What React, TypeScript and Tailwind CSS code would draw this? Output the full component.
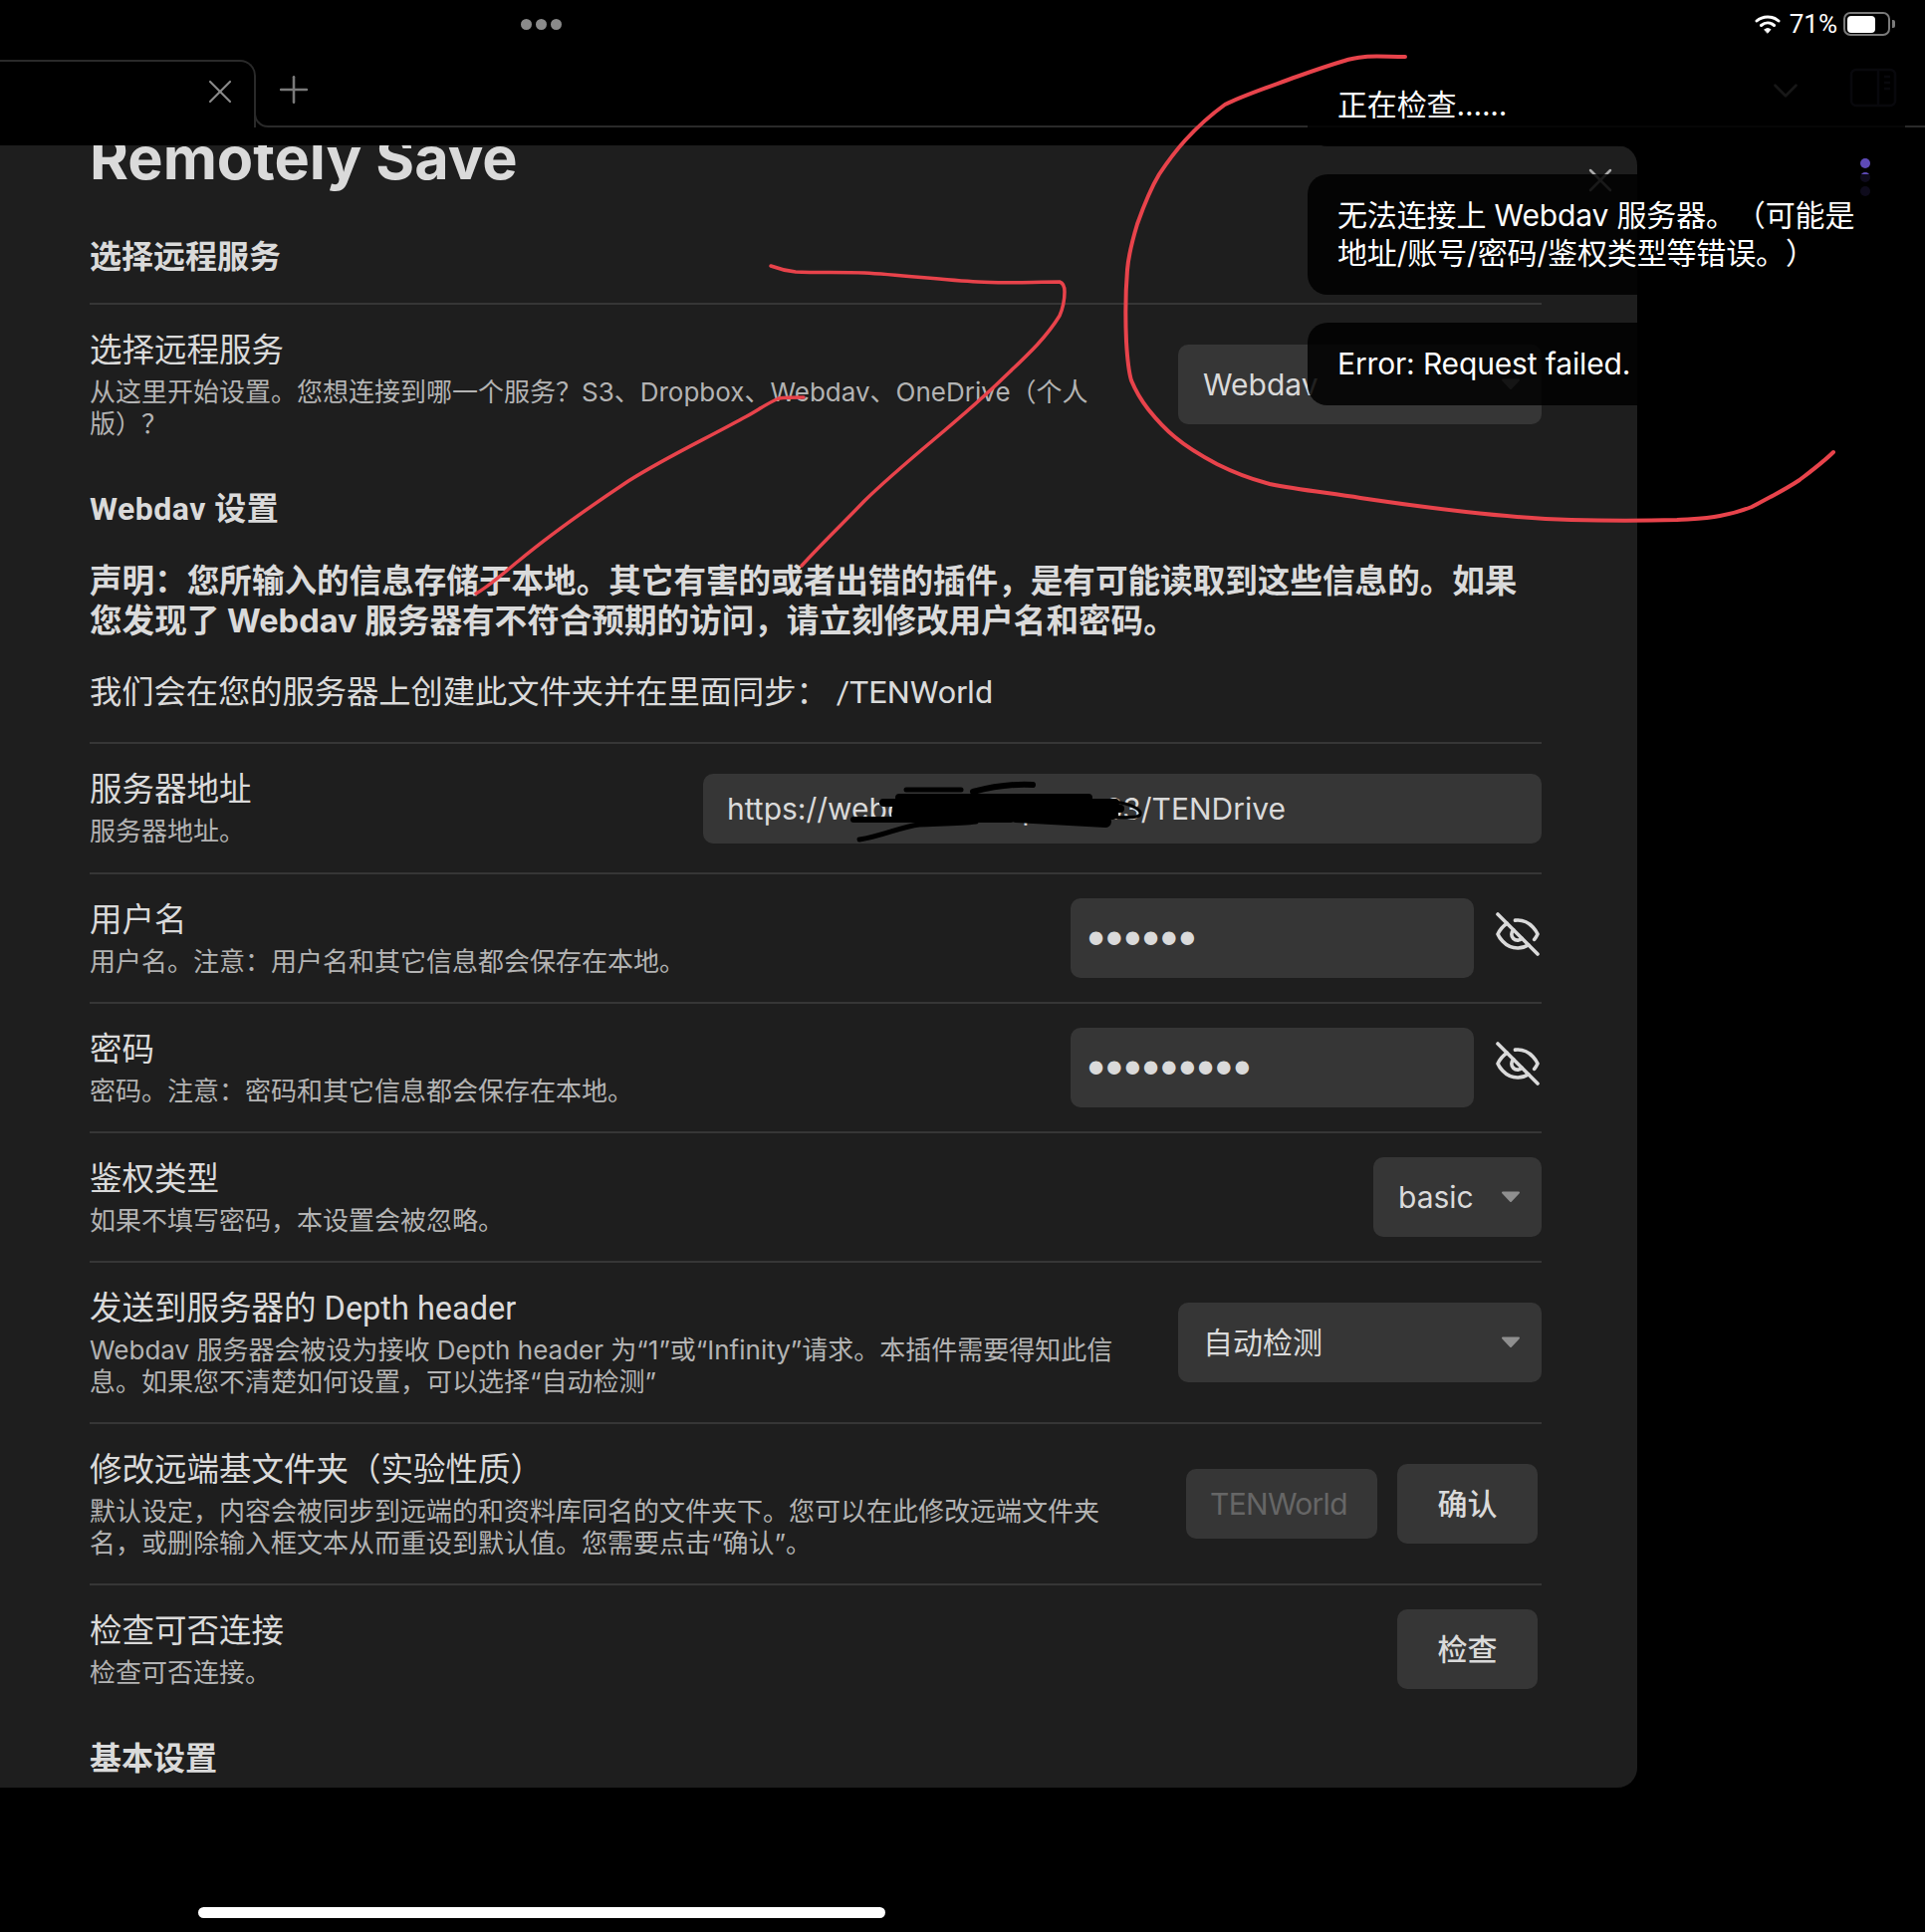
import React from 'react';
import { X, Plus, ChevronDown } from 'lucide-react';

const divider = 'border-t-2 border-[#363636]';
const control = 'rounded-[10px] bg-[#363636] text-[30px] text-[#dadada]';

interface RowProps {
	title: string;
	children?: React.ReactNode;
	desc: React.ReactNode;
	className?: string;
}

const Row = ({ title, desc, children, className = 'min-h-[130px]' }: RowProps) => (
	<div className={`flex items-center justify-between py-[24px] ${divider} ${className}`}>
		<div className="shrink-0">
			<div className="mb-[5px] font-['Roboto','Noto_Sans_CJK_SC',sans-serif] text-[32.5px] leading-[42px] text-[#dadada]">{title}</div>
			<div className="text-[26px] leading-[32px] text-[#b3b3b3]">{desc}</div>
		</div>
		{children}
	</div>
);

const Arrow = () => (
	<svg width="20" height="12" viewBox="0 0 20 12" className="shrink-0">
		<path d="M2 1.5h16L10 10z" fill="#8f8f8f" stroke="#8f8f8f" strokeWidth="2" strokeLinejoin="round" />
	</svg>
);

const Select = ({ label, className }: { label: string; className: string }) => (
	<div className={`flex h-[80px] items-center justify-between pl-[25px] pr-[21px] ${control} ${className}`}>
		<span>{label}</span>
		<Arrow />
	</div>
);

const EyeOff = () => (
	<svg width="48" height="48" viewBox="0 0 24 24" fill="none" stroke="#dadada" strokeWidth="1.8" strokeLinecap="round" strokeLinejoin="round" className="mb-[8px] shrink-0">
		<path d="M9.88 9.88a3 3 0 1 0 4.24 4.24" />
		<path d="M10.73 5.08A10.43 10.43 0 0 1 12 5c7 0 10 7 10 7a13.16 13.16 0 0 1-1.67 2.68" />
		<path d="M6.61 6.61A13.526 13.526 0 0 0 2 12s3 7 10 7a9.74 9.74 0 0 0 5.39-1.61" />
		<line x1="2" y1="2" x2="22" y2="22" />
	</svg>
);

const Secret = ({ value }: { value: string }) => (
	<div className="flex items-center gap-[20px]">
		<input
			type="password"
			readOnly
			value={value}
			className="h-[80px] w-[405px] rounded-[10px] bg-[#363636] px-[12px] pt-[4px] font-['DejaVu_Sans',sans-serif] text-[46px] tracking-[-8.8px] text-[#dadada] outline-none"
		/>
		<EyeOff />
	</div>
);

const Button = ({ label }: { label: string }) => (
	<button className={`mr-[4px] h-[80px] w-[141px] font-medium ${control}`}>{label}</button>
);

const Wifi = () => (
	<svg width="26" height="20" viewBox="0 0 26 20" fill="none" stroke="#fff" strokeWidth="3" strokeLinecap="round">
		<path d="M2 7C8 1.5 18 1.5 24 7" />
		<path d="M6.5 11.5C10.5 8 15.5 8 19.5 11.5" />
		<path d="M10 15.5Q13 13.5 16 15.5L13 19z" fill="#fff" strokeWidth="1" strokeLinejoin="round" />
	</svg>
);

const Battery = () => (
	<div className="flex items-center gap-[2px]">
		<div className="flex h-[24px] w-[47px] items-center rounded-[7px] border-2 border-[#7a7a7a] px-[2px]">
			<div className="h-[17px] w-[28px] rounded-[4px] bg-white" />
		</div>
		<div className="h-[8px] w-[3px] rounded-r-[2px] bg-[#7a7a7a]" />
	</div>
);

const SidebarIcon = () => (
	<svg width="48" height="40" viewBox="0 0 48 40" fill="none" stroke="#3a3a55" strokeWidth="2.5">
		<rect x="2" y="2" width="44" height="36" rx="5" />
		<path d="M29 2v36M35 9h6M35 15h6M35 21h6" />
	</svg>
);

// red pen marks + black scribble drawn on top of the screenshot
const Annotations = () => (
	<svg className="pointer-events-none absolute left-0 top-0" width="1933" height="1940" fill="none" strokeLinecap="round" strokeLinejoin="round">
		<g stroke="#000">
			<path strokeWidth="5" d="M910 793L965 793" />
			<path strokeWidth="6" d="M977 795C1000 789 1020 787 1037 788" />
			<path strokeWidth="8" d="M903 801L1093 801" />
			<path strokeWidth="8" d="M887 806L1120 806" />
			<path strokeWidth="8" d="M900 812L1125 812" />
			<path strokeWidth="10" d="M900 818L1118 818" />
			<path strokeWidth="6" d="M857 823L1015 823" />
			<path strokeWidth="12" d="M1020 820L1110 825" />
			<path strokeWidth="5" d="M863 843C885 840 905 830 923 828C945 827 965 827 980 825" />
			<path strokeWidth="3" d="M1120 805C1135 807 1147 813 1145 818C1142 822 1125 821 1110 820" />
		</g>
		<g stroke="#e8434b">
			<path
				strokeWidth="4"
				d="M1411 57C1395 57 1380 56 1371 57C1362 58 1356 59 1350 61C1333 66 1316 72 1302 77C1278 86 1250 95 1230 105C1212 118 1200 130 1190 141C1180 152 1172 163 1164 175C1155 190 1148 208 1142 225C1136 245 1133 258 1132 271C1130 295 1130 320 1131 343C1132 360 1133 372 1136 382C1141 394 1146 402 1153 411C1161 421 1170 431 1180 439C1193 450 1207 458 1222 466C1238 474 1256 481 1275 486C1305 492 1335 495 1366 500C1400 505 1436 510 1472 514C1508 518 1543 521 1578 522C1614 523 1650 523 1684 522C1700 521 1714 521 1727 518C1738 516 1749 513 1759 509C1776 500 1792 492 1807 482C1820 472 1832 463 1841 454"
			/>
			<path
				strokeWidth="3.5"
				d="M774 267C782 270 790 272 799 273C822 274 845 273 868 274C905 276 945 281 982 283C1010 285 1037 283 1064 283C1067 284 1069 288 1069 293C1069 302 1067 310 1064 317C1050 340 1030 358 1007 380C962 424 912 460 868 503C847 525 826 545 805 568"
			/>
			<path
				strokeWidth="3.5"
				d="M807 399C798 399 790 399 782 400C770 405 758 414 746 420C708 441 669 459 631 483C592 509 556 534 521 563C506 575 492 588 478 596"
			/>
		</g>
	</svg>
);

export default function App() {
	return (
		<div lang="zh-CN" className="relative h-[1940px] w-[1933px] overflow-hidden bg-black font-['Inter','Noto_Sans_CJK_SC',sans-serif] [text-spacing-trim:space-all]">
			{/* status bar */}
			<div className="flex h-[48px] items-center justify-between pl-[523px] pr-[30px]">
				<div className="flex gap-[4px]">
					<div className="h-[11px] w-[11px] rounded-full bg-[#8a8a8a]" />
					<div className="h-[11px] w-[11px] rounded-full bg-[#8a8a8a]" />
					<div className="h-[11px] w-[11px] rounded-full bg-[#8a8a8a]" />
				</div>
				<div className="flex items-center gap-[9px]">
					<Wifi />
					<span className="-mr-[3px] font-['Roboto',sans-serif] text-[26px] leading-none text-white">71%</span>
					<Battery />
				</div>
			</div>

			{/* tab bar */}
			<div className="mt-[12px] flex h-[68px]">
				<div className="flex h-[68px] w-[257px] items-center justify-end rounded-tr-[16px] border-r-2 border-t-2 border-[#2a2a2a] pb-[6px] pr-[14px]">
					<X size={40} strokeWidth={1.3} color="#8a8a8a" />
				</div>
				<div className="relative mt-[20px] flex h-[48px] flex-1 items-center justify-between rounded-bl-[14px] border-b-2 border-l-2 border-[#2a2a2a] -ml-[2px] pl-[16px]">
					<Plus size={44} strokeWidth={1.4} color="#7a7a7a" className="-mt-[26px]" />
				</div>
			</div>
			<div className="absolute left-[1772px] top-[70px]">
				<ChevronDown size={42} strokeWidth={1.5} color="#9a9a9a" />
			</div>
			<div className="absolute left-[1857px] top-[68px]">
				<SidebarIcon />
			</div>
			<div className="absolute left-[1868px] top-[159px] flex flex-col gap-[4px]">
				<div className="h-[10px] w-[10px] rounded-full bg-[#5e4ab8]" />
				<div className="h-[10px] w-[10px] rounded-full bg-[#5e4ab8]" />
				<div className="h-[10px] w-[10px] rounded-full bg-[#5e4ab8]" />
			</div>

			{/* settings panel */}
			<div className="relative mt-[18px] h-[1649px] w-[1644px] overflow-hidden rounded-r-[20px] bg-[#1e1e1e] pl-[90px] pr-[96px]">
				<div className="absolute left-[1587px] top-[15px]">
					<X size={40} strokeWidth={1.5} color="#aaaaaa" />
				</div>
				<h1 className="-mt-[20px] mb-[48px] text-[59.4px] font-bold leading-[64px] text-[#dadada]">Remotely Save</h1>
				<h2 className="mb-[26px] text-[32px] font-bold leading-[40px] text-[#dadada]">选择远程服务</h2>

				<Row
					title="选择远程服务"
					className="min-h-[162px]"
					desc={
						<>
							从这里开始设置。您想连接到哪一个服务&#xFF1F;S3、Dropbox、Webdav、OneDrive&#xFF08;个人
							<br />
							版&#xFF09;&#xFF1F;
						</>
					}
				>
					<Select label="Webdav" className="w-[365px]" />
				</Row>

				<h2 className="mt-[25px] font-['Roboto','Noto_Sans_CJK_SC',sans-serif] text-[32px] font-bold leading-[40px] tracking-[0.5px] text-[#dadada]">Webdav 设置</h2>
				<p className="mt-[32px] text-[32.6px] font-bold leading-[40px] text-[#dadada]">
					声明&#xFF1A;您所输入的信息存储于本地。其它有害的或者出错的插件&#xFF0C;是有可能读取到这些信息的。如果
					<br />
					您发现了 Webdav 服务器有不符合预期的访问&#xFF0C;请立刻修改用户名和密码。
				</p>
				<p className="mb-[30px] mt-[32px] font-['Roboto','Noto_Sans_CJK_SC',sans-serif] text-[32.25px] leading-[40px] text-[#dadada]">我们会在您的服务器上创建此文件夹并在里面同步&#xFF1A; /TENWorld</p>

				<Row title="服务器地址" desc="服务器地址。" className="min-h-[131px]">
					<input
						readOnly
						value="https://webdav.example-a:63/TENDrive"
						className={`h-[70px] w-[842px] px-[24px] outline-none ${control}`}
					/>
				</Row>
				<Row title="用户名" desc="用户名。注意&#xFF1A;用户名和其它信息都会保存在本地。">
					<Secret value="aaaaaa" />
				</Row>
				<Row title="密码" desc="密码。注意&#xFF1A;密码和其它信息都会保存在本地。">
					<Secret value="aaaaaaaaa" />
				</Row>
				<Row title="鉴权类型" desc="如果不填写密码&#xFF0C;本设置会被忽略。">
					<Select label="basic" className="w-[169px]" />
				</Row>
				<Row
					title="发送到服务器的 Depth header"
					className="min-h-[162px]"
					desc={
						<>
							Webdav 服务器会被设为接收 Depth header 为“1”或“Infinity”请求。本插件需要得知此信
							<br />
							息。如果您不清楚如何设置&#xFF0C;可以选择“自动检测”
						</>
					}
				>
					<Select label="自动检测" className="w-[365px]" />
				</Row>
				<Row
					title="修改远端基文件夹&#xFF08;实验性质&#xFF09;"
					className="min-h-[162px]"
					desc={
						<>
							默认设定&#xFF0C;内容会被同步到远端的和资料库同名的文件夹下。您可以在此修改远端文件夹
							<br />
							名&#xFF0C;或删除输入框文本从而重设到默认值。您需要点击“确认”。
						</>
					}
				>
					<div className="flex items-center gap-[20px]">
						<input
							placeholder="TENWorld"
							className={`h-[70px] w-[192px] px-[24px] tracking-[-0.7px] outline-none placeholder:text-[#666666] ${control}`}
						/>
						<Button label="确认" />
					</div>
				</Row>
				<Row title="检查可否连接" desc="检查可否连接。">
					<Button label="检查" />
				</Row>

				<h2 className="mt-[26px] text-[32px] font-bold leading-[40px] text-[#dadada]">基本设置</h2>
			</div>

			{/* home indicator */}
			<div className="ml-[199px] mt-[120px] h-[11px] w-[690px] rounded-full bg-white" />

			{/* notices */}
			<div className="absolute right-[20px] top-[64px] flex w-[600px] flex-col gap-[28px] text-[30px] leading-[38px] tracking-[-0.15px] text-white">
				<div className="rounded-[20px] bg-black/85 px-[30px] pb-[23px] pt-[22px]">正在检查......</div>
				<div className="rounded-[20px] bg-black/85 px-[30px] pb-[23px] pt-[22px]">
					无法连接上 Webdav 服务器。&#xFF08;可能是
					<br />
					地址/账号/密码/鉴权类型等错误。&#xFF09;
				</div>
				<div className="rounded-[20px] bg-black/85 px-[30px] pb-[23px] pt-[22px]">Error: Request failed.</div>
			</div>

			<Annotations />
		</div>
	);
}
